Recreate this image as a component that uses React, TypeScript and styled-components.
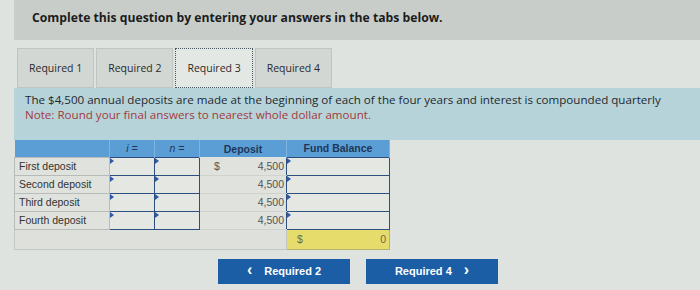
import React from "react";
import styled, { createGlobalStyle } from "styled-components";

const GlobalStyle = createGlobalStyle`
  html, body {
    margin: 0;
    padding: 0;
    background: #dfe3df;
  }
  body {
    width: 700px;
    height: 290px;
    overflow: hidden;
    font-family: "Open Sans", "Liberation Sans", sans-serif;
  }
`;

const rows = ["First deposit", "Second deposit", "Third deposit", "Fourth deposit"];

const App = () => {
  return (
    <Page>
      <GlobalStyle />
      <Header>Complete this question by entering your answers in the tabs below.</Header>
      <Tabs>
        <Tab>Required 1</Tab>
        <Tab>Required 2</Tab>
        <Tab active>Required 3</Tab>
        <Tab>Required 4</Tab>
      </Tabs>
      <Panel>
        <p>
          The $4,500 annual deposits are made at the beginning of each of the four years and interest is
          compounded quarterly
        </p>
        <Note>Note: Round your final answers to nearest whole dollar amount.</Note>
      </Panel>
      <Table>
        <thead>
          <tr>
            <Th width={95}></Th>
            <Th width={45} italic>
              i =
            </Th>
            <Th width={45} italic>
              n =
            </Th>
            <Th width={87}>Deposit</Th>
            <Th width={103}>Fund Balance</Th>
          </tr>
        </thead>
        <tbody>
          {rows.map((label, i) => (
            <tr key={label}>
              <Label>{label}</Label>
              <InputCell />
              <InputCell />
              <Amount>
                {i === 0 && <span>$</span>}
                <b>4,500</b>
              </Amount>
              <InputCell />
            </tr>
          ))}
          <tr>
            <Blank colSpan={4} />
            <Total>
              <span>$</span>
              <b>0</b>
            </Total>
          </tr>
        </tbody>
      </Table>
      <Nav>
        <NavButton>
          <Chevron>‹</Chevron>
          Required 2
        </NavButton>
        <NavButton>
          Required 4
          <Chevron>›</Chevron>
        </NavButton>
      </Nav>
    </Page>
  );
};

export default App;

const Page = styled.div`
  width: 700px;
  height: 290px;
  padding-left: 14px;
  box-sizing: border-box;
`;

const Header = styled.div`
  background: #c8cdc9;
  height: 40px;
  padding: 9px 0 0 18px;
  box-sizing: border-box;
  font-size: 12.2px;
  font-weight: 700;
  color: #1c1c1c;
`;

const Tabs = styled.div`
  display: flex;
  padding: 8px 0 0 3px;
  height: 48px;
  box-sizing: border-box;
  align-items: flex-end;
`;

const Tab = styled.div<{ active?: boolean }>`
  height: 40px;
  display: flex;
  align-items: center;
  padding: 0 11px;
  font-size: 10.5px;
  color: #2a2a2a;
  background: ${(p) => (p.active ? "#e4e8e4" : "#d2d7d3")};
  border: ${(p) => (p.active ? "1.5px dotted #4a5560" : "1px solid #c0c5c1")};
  margin-right: 2px;
  box-sizing: border-box;
`;

const Panel = styled.div`
  background: #b7d3da;
  padding: 4px 0 4px 11px;
  height: 52px;
  box-sizing: border-box;
  p {
    margin: 0;
    font-size: 11.6px;
    color: #1e2a2e;
    line-height: 15px;
  }
`;

const Note = styled.p`
  && {
    color: #a23a3a;
  }
`;

const Table = styled.table`
  border-collapse: collapse;
  font-family: "Liberation Sans", Arial, sans-serif;
  font-size: 10.5px;
  td,
  th {
    padding: 0;
    height: 18px;
    box-sizing: border-box;
  }
`;

const Th = styled.th<{ width: number; italic?: boolean }>`
  width: ${(p) => p.width}px;
  background: #5b9ed6;
  color: #1e3658;
  font-weight: ${(p) => (p.italic ? 400 : 700)};
  font-style: ${(p) => (p.italic ? "italic" : "normal")};
  border-right: 1px solid #7fb4e0;
  && {
    height: 17px;
  }
`;

const Label = styled.td`
  background: #dfe2dd;
  border: 1px solid #b8bcb8;
  padding-left: 4px !important;
  color: #333;
`;

const InputCell = styled.td`
  background: #e4e7e2;
  border: 1.5px solid #2d4f80;
  position: relative;
  &::before {
    content: "";
    position: absolute;
    left: 0;
    top: 0;
    border-top: 3px solid transparent;
    border-bottom: 3px solid transparent;
    border-left: 4px solid #2d5aa8;
  }
`;

const Amount = styled.td`
  background: #dfe2dd;
  border-bottom: 1px solid #cfd2cd;
  color: #555;
  position: relative;
  text-align: right;
  padding-right: 2px !important;
  span {
    position: absolute;
    left: 14px;
    top: 3px;
  }
  b {
    font-weight: 400;
  }
`;

const Blank = styled.td`
  background: #dde0db;
  border: 1px solid #c4c7c3;
  && {
    height: 20px;
  }
`;

const Total = styled.td`
  background: #e6dc6c;
  border: 1px solid #b9b26a;
  color: #6a6a40;
  padding: 0 3px 0 10px !important;
  span {
    float: left;
  }
  b {
    float: right;
    font-weight: 400;
  }
`;

const Nav = styled.div`
  display: flex;
  gap: 16px;
  padding: 9px 0 0 204px;
`;

const NavButton = styled.div`
  width: 132px;
  height: 25px;
  background: #1b5ea6;
  color: #fff;
  font-family: "Liberation Sans", Arial, sans-serif;
  font-weight: 700;
  font-size: 11px;
  display: flex;
  align-items: center;
  justify-content: center;
  gap: 12px;
`;

const Chevron = styled.span`
  font-size: 16px;
  line-height: 1;
  margin-top: -2px;
`;
